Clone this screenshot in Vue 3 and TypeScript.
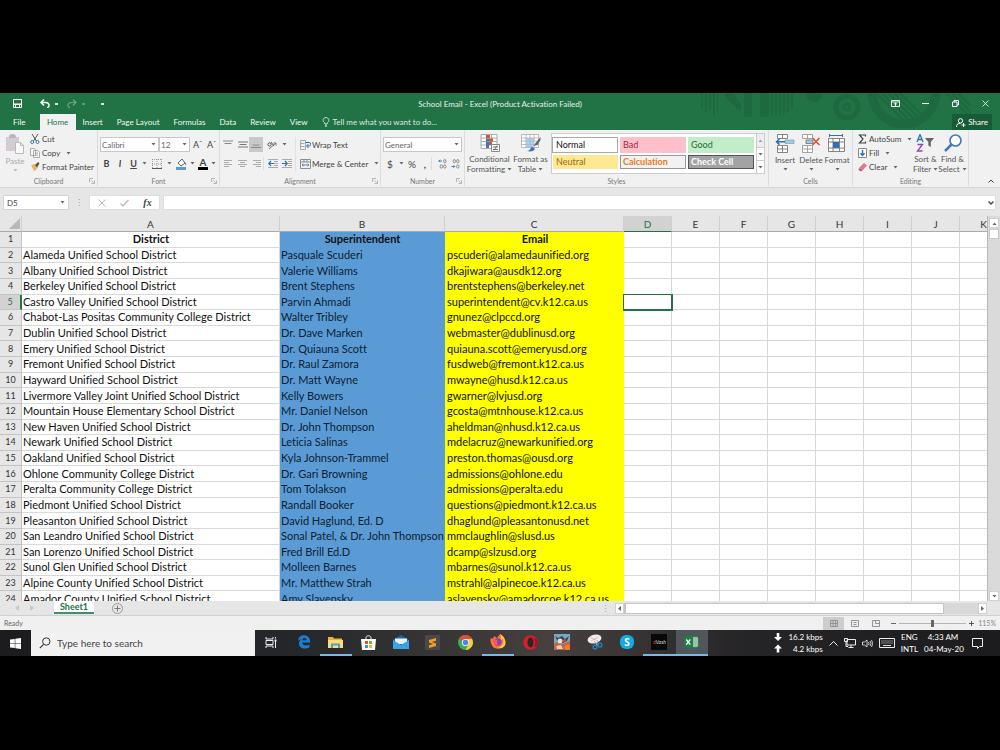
<script setup lang="ts">
import { h, ref } from 'vue'

interface Contact {
  district: string
  name: string
  email: string
}

const Caret = () =>
  h('svg', { class: 'caret', viewBox: '0 0 5 3', width: 5, height: 3, 'aria-hidden': 'true' }, [
    h('path', { d: 'M.5 0h4L2.500 2.600z', fill: '#666' }),
  ])

const Launcher = () =>
  h('svg', { class: 'launcher', viewBox: '0 0 6 6', width: 6, height: 6, 'aria-hidden': 'true' }, [
    h('path', { d: 'M.5 4V.5H4M2.500 2.500l2 2M5.500 2.500v3h-3', fill: 'none', stroke: '#999', 'stroke-width': 0.7 }),
  ])

const tabs = ['File', 'Home', 'Insert', 'Page Layout', 'Formulas', 'Data', 'Review', 'View']
const columns = ['A', 'B', 'C', 'D', 'E', 'F', 'G', 'H', 'I', 'J', 'K']
const emptyColumns = ['D', 'E', 'F', 'G', 'H', 'I', 'J', 'K']
const cellRef = ref('D5')
const formula = ref('')
const query = ref('')
const zoom = ref(50)

const contacts: Contact[] = [
  { district: 'Alameda Unified School District', name: 'Pasquale Scuderi', email: 'pscuderi@alamedaunified.org' },
  { district: 'Albany Unified School District', name: 'Valerie Williams', email: 'dkajiwara@ausdk12.org' },
  { district: 'Berkeley Unified School District', name: 'Brent Stephens', email: 'brentstephens@berkeley.net' },
  { district: 'Castro Valley Unified School District', name: 'Parvin Ahmadi', email: 'superintendent@cv.k12.ca.us' },
  { district: 'Chabot-Las Positas Community College District', name: 'Walter Tribley', email: 'gnunez@clpccd.org' },
  { district: 'Dublin Unified School District', name: 'Dr. Dave Marken', email: 'webmaster@dublinusd.org' },
  { district: 'Emery Unified School District', name: 'Dr. Quiauna Scott', email: 'quiauna.scott@emeryusd.org' },
  { district: 'Fremont Unified School District', name: 'Dr. Raul Zamora', email: 'fusdweb@fremont.k12.ca.us' },
  { district: 'Hayward Unified School District', name: 'Dr. Matt Wayne', email: 'mwayne@husd.k12.ca.us' },
  { district: 'Livermore Valley Joint Unified School District', name: 'Kelly Bowers', email: 'gwarner@lvjusd.org' },
  { district: 'Mountain House Elementary School District', name: 'Mr. Daniel Nelson', email: 'gcosta@mtnhouse.k12.ca.us' },
  { district: 'New Haven Unified School District', name: 'Dr. John Thompson', email: 'aheldman@nhusd.k12.ca.us' },
  { district: 'Newark Unified School District', name: 'Leticia Salinas', email: 'mdelacruz@newarkunified.org' },
  { district: 'Oakland Unified School District', name: 'Kyla Johnson-Trammel', email: 'preston.thomas@ousd.org' },
  { district: 'Ohlone Community College District', name: 'Dr. Gari Browning', email: 'admissions@ohlone.edu' },
  { district: 'Peralta Community College District', name: 'Tom Tolakson', email: 'admissions@peralta.edu' },
  { district: 'Piedmont Unified School District', name: 'Randall Booker', email: 'questions@piedmont.k12.ca.us' },
  { district: 'Pleasanton Unified School District', name: 'David Haglund, Ed. D', email: 'dhaglund@pleasantonusd.net' },
  { district: 'San Leandro Unified School District', name: 'Sonal Patel, & Dr. John Thompson', email: 'mmclaughlin@slusd.us' },
  { district: 'San Lorenzo Unified School District', name: 'Fred Brill Ed.D', email: 'dcamp@slzusd.org' },
  { district: 'Sunol Glen Unified School District', name: 'Molleen Barnes', email: 'mbarnes@sunol.k12.ca.us' },
  { district: 'Alpine County Unified School District', name: 'Mr. Matthew Strah', email: 'mstrahl@alpinecoe.k12.ca.us' },
  { district: 'Amador County Unified School District', name: 'Amy Slavensky', email: 'aslavensky@amadorcoe.k12.ca.us' },
]
</script>

<template>
  <main class="screen">
    <header class="top">
      <svg class="pattern" width="300" height="37" viewBox="0 0 300 37" aria-hidden="true">
        <g fill="#1e693f">
          <path d="M1 0h2v16H1zM5 0h2v20H5zM9 0h2v17H9zM13 0h2v23h-2zM17 0h1v20h-1zM25 0h9l7 12v7L25 4zM44 0h8v24h-8zM60 0h9v24h-9z" />
          <path d="M71 0h2v24h-2zM75 0h2v23h-2zM79 0h2v23h-2zM83 0h2v21h-2zM87 0h2v19h-2zM91 0h2v16h-2z" />
          <circle cx="114" cy="1" r="8" />
        </g>
        <g fill="none" stroke="#1e693f">
          <circle cx="147" cy="14" r="11" stroke-width="5" />
          <circle cx="147" cy="14" r="3" stroke-width="3" />
          <circle cx="204" cy="-1" r="32" stroke-width="9" />
          <path d="M176 0l28 28M182 0l26 26M188 0l25 25M194 0l23 23M200 0l20 20M246 0l24 24M252 0l19 19M258 0l13 13" stroke-width="2" />
        </g>
      </svg>
      <div class="titlebar">
        <div class="quick">
          <button aria-label="Save"><svg width="9" height="9" viewBox="0 0 9 9"><path d="M.5.5h8v8h-8z" fill="none" stroke="#fff" /><path d="M1 4.500h7V6H1zM2 6h1v3H2zM6 6h1v3H6z" fill="#fff" /></svg></button>
          <button aria-label="Undo"><svg width="10" height="9" viewBox="0 0 10 9"><path d="M4 .5L1 3.500l3 3M1 3.500h4.500C8 3.500 9 5 9 6.500S8 8.500 7 8.500" fill="none" stroke="#fff" stroke-width="1.500" /></svg></button>
          <i class="tri"></i>
          <button aria-label="Redo" class="faded"><svg width="10" height="9" viewBox="0 0 10 9"><path d="M6 .5l3 3-3 3M9 3.500H4.500C2 3.500 1 5 1 6.500s1 2 2 2" fill="none" stroke="#fff" stroke-width="1.200" /></svg></button>
          <i class="tri faded"></i>
          <button aria-label="Customize"><i class="tri"></i></button>
        </div>
        <h1>School Email - Excel (Product Activation Failed)</h1>
        <div class="window-buttons">
          <button aria-label="Ribbon display options"><svg width="9" height="7" viewBox="0 0 9 7"><path d="M.5.5h8v6h-8zM.5 2h8M4.500 6V3M3 4.300L4.500 3 6 4.300" fill="none" stroke="#fff" stroke-width=".9" /></svg></button>
          <button aria-label="Minimize"><svg width="7" height="7" viewBox="0 0 7 7"><path d="M0 3.500h7" stroke="#fff" /></svg></button>
          <button aria-label="Restore"><svg width="7" height="7" viewBox="0 0 7 7"><path d="M.5 2h4.500v4.500H.5zM2 2V.5h4.500V5H5" fill="none" stroke="#fff" /></svg></button>
          <button aria-label="Close"><svg width="7" height="7" viewBox="0 0 7 7"><path d="M.5.5l6 6M6.500.5l-6 6" stroke="#fff" stroke-width=".8" /></svg></button>
        </div>
      </div>
      <nav class="tabs">
        <button v-for="tab in tabs" :key="tab" :class="{ active: tab === 'Home' }">{{ tab }}</button>
        <button class="tell">
          <svg width="8" height="10" viewBox="0 0 8 10"><path d="M2.800 7V6C0 4 1 .6 4 .6S8 4 5.200 6v1zM3 8.200h2M3.200 9.400h1.600" fill="none" stroke="#e5f3ea" stroke-width=".8" /></svg>
          Tell me what you want to do...
        </button>
        <button class="share">
          <svg width="10" height="9" viewBox="0 0 10 9"><circle cx="4.500" cy="2.800" r="2.200" fill="none" stroke="#fff" /><path d="M.5 9C.5 6.500 2 5.200 4.500 5.200M5.500 7h4M7.500 5v4" fill="none" stroke="#fff" /></svg>
          Share
        </button>
      </nav>
    </header>

    <section class="ribbon" aria-label="Home ribbon">
      <div class="group">
        <div class="body clip">
          <button class="big paste">
            <svg width="20" height="20" viewBox="0 0 20 20"><path d="M1 3h13v14H1z" fill="#d3cdd3" /><path d="M4 3c0-2 1.500-3 3.500-3S11 1 11 3v1H4z" fill="#b9b4b9" /><path d="M10.500 8.500h5l3 3v8h-8zM15.500 8.500v3h3" fill="#f8f8f8" stroke="#bbb" /></svg>
            <span>Paste</span><Caret />
          </button>
          <div class="stack">
            <button><svg width="10" height="10" viewBox="0 0 10 10"><path d="M2 0l4.500 7M8 0L3.500 7" stroke="#555" fill="none" /><circle cx="2.200" cy="8" r="1.500" fill="none" stroke="#3f78b5" /><circle cx="7.500" cy="8" r="1.500" fill="none" stroke="#3f78b5" /></svg>Cut</button>
            <button><svg width="10" height="10" viewBox="0 0 10 10"><path d="M.5.5h4l1 1v6h-5zM3.500 2.500H8l1.500 2v5h-6zM5 5h3M5 7h3" fill="#f7f7f7" stroke="#999" stroke-width=".8" /></svg>Copy<Caret /></button>
            <button><svg width="10" height="10" viewBox="0 0 10 10"><path d="M1 3l4-1 3 3-2 3-2 1z" fill="#e9b565" /><path d="M5 3l3-3 1.500 1.500-2.500 4z" fill="#555" /></svg>Format Painter</button>
          </div>
        </div>
        <footer>Clipboard<Launcher /></footer>
      </div>

      <div class="group">
        <div class="body rows">
          <div class="row font-top">
            <label class="pick"><select aria-label="Font"><option>Calibri</option></select><Caret /></label>
            <label class="pick"><select aria-label="Font size"><option>12</option></select><Caret /></label>
            <button class="letter" aria-label="Increase font size">A<sup>ˆ</sup></button>
            <button class="letter" aria-label="Decrease font size">A<sup>ˇ</sup></button>
          </div>
          <div class="row font-bottom">
            <button><b>B</b></button><button><b><em>I</em></b></button><button><b><u>U</u></b></button><Caret />
            <button aria-label="Borders"><svg width="10" height="10" viewBox="0 0 10 10"><path d="M.5 0v9M5 0v9M9.500 0v9M0 .5h10M0 5h10" stroke="#888" stroke-width=".8" stroke-dasharray="1 1" /><path d="M0 9.500h10" stroke="#555" /></svg></button><Caret />
            <button aria-label="Fill color"><svg width="11" height="12" viewBox="0 0 11 12"><path d="M2 5l4-4 3 4-4 3z" fill="#fff" stroke="#555" stroke-width=".9" /><path d="M9 4q2 2 1 3.500Q8.500 7 9 4" fill="#3b79bd" /><path d="M0 9h10v3H0z" fill="#5b9bd5" /></svg></button><Caret />
            <button aria-label="Font color" class="font-color">A</button><Caret />
          </div>
        </div>
        <footer>Font<Launcher /></footer>
      </div>

      <div class="group">
        <div class="body align">
          <div class="rows align-left">
            <div class="row align-top">
              <button aria-label="Top align"><svg width="10" height="9" viewBox="0 0 10 9"><path d="M0 1h10M1.500 3.500h7" stroke="#888" /></svg></button>
              <button aria-label="Middle align"><svg width="10" height="9" viewBox="0 0 10 9"><path d="M0 2h10M1.500 4.500h7M0 7h10" stroke="#777" /></svg></button>
              <button aria-label="Bottom align" class="pressed"><svg width="10" height="9" viewBox="0 0 10 9"><path d="M1.500 5h7M0 7.500h10" stroke="#888" /></svg></button>
              <button aria-label="Orientation"><svg width="11" height="10" viewBox="0 0 11 10"><path d="M2 9l7-6M6.500 3H9v2.500" fill="none" stroke="#777" /><circle cx="2.500" cy="4.500" r="1.600" fill="none" stroke="#555" /><path d="M4 2l3 4" stroke="#555" /></svg></button><Caret />
            </div>
            <div class="row align-bottom">
              <button aria-label="Align left"><svg width="9" height="8" viewBox="0 0 9 8"><path d="M0 .5h8M0 2.500h5M0 4.500h8M0 6.500h5" stroke="#999" stroke-width=".8" /></svg></button>
              <button aria-label="Center"><svg width="9" height="8" viewBox="0 0 9 8"><path d="M0 .5h9M2 2.500h5M0 4.500h9M2 6.500h5" stroke="#999" stroke-width=".8" /></svg></button>
              <button aria-label="Align right"><svg width="9" height="8" viewBox="0 0 9 8"><path d="M1 .5h8M4 2.500h5M1 4.500h8M4 6.500h5" stroke="#999" stroke-width=".8" /></svg></button>
              <i class="vline"></i>
              <button aria-label="Decrease indent"><svg width="10" height="9" viewBox="0 0 10 9"><path d="M0 .5h10M6 2.500h4M6 4.500h4M6 6.500h4M0 8.500h10" stroke="#999" stroke-width=".8" /><path d="M6 4.500H1M3 2L.8 4.500 3 7" fill="none" stroke="#2f6fb5" stroke-width="1.200" /></svg></button>
              <button aria-label="Increase indent"><svg width="10" height="9" viewBox="0 0 10 9"><path d="M0 .5h10M6 2.500h4M6 4.500h4M6 6.500h4M0 8.500h10" stroke="#999" stroke-width=".8" /><path d="M0 4.500h5M3 2l2.200 2.500L3 7" fill="none" stroke="#2f6fb5" stroke-width="1.200" /></svg></button>
            </div>
          </div>
          <div class="rows align-right">
            <button class="row"><svg width="11" height="10" viewBox="0 0 11 10"><path d="M.5.5h5v9h-5zM.5 3.500h4M.5 6.500h4" fill="none" stroke="#999" stroke-width=".8" /><path d="M5.500 2.500h3.700c2 0 2 3.500 0 3.500H7M8.500 4L6.500 6l2 2" fill="none" stroke="#2f6fb5" /></svg>Wrap Text</button>
            <button class="row"><svg width="11" height="10" viewBox="0 0 11 10"><path d="M.5.5h10v9H.5zM.5 3h10M4 .5V3M7 .5V3" fill="none" stroke="#777" stroke-width=".8" /><path d="M2 6h7M3.500 4.800L2.200 6l1.300 1.200M7.500 4.800L8.800 6 7.500 7.200" fill="none" stroke="#2f6fb5" stroke-width=".8" /></svg>Merge &amp; Center<Caret /></button>
          </div>
        </div>
        <footer>Alignment<Launcher /></footer>
      </div>

      <div class="group">
        <div class="body rows">
          <div class="row number-top"><label class="pick"><select aria-label="Number format"><option>General</option></select><Caret /></label></div>
          <div class="row number-bottom">
            <button class="sym">$</button><Caret /><button class="sym">%</button><button class="sym comma">,</button><i class="vline"></i>
            <button aria-label="Increase decimal"><svg width="9" height="10" viewBox="0 0 9 10"><path d="M4 2H.8M2 .7L.8 2 2 3.300" fill="none" stroke="#2f6fb5" stroke-width=".9" /><g fill="none" stroke="#777" stroke-width=".8"><ellipse cx="6.800" cy="2.200" rx="1.200" ry="1.700" /><ellipse cx="3.300" cy="7.500" rx="1.200" ry="1.700" /><ellipse cx="6.800" cy="7.500" rx="1.200" ry="1.700" /></g></svg></button>
            <button aria-label="Decrease decimal"><svg width="9" height="10" viewBox="0 0 9 10"><path d="M.5 7.500h3.200M2.500 6.200l1.200 1.300L2.500 8.800" fill="none" stroke="#2f6fb5" stroke-width=".9" /><g fill="none" stroke="#777" stroke-width=".8"><ellipse cx="3.300" cy="2.200" rx="1.200" ry="1.700" /><ellipse cx="6.800" cy="2.200" rx="1.200" ry="1.700" /><ellipse cx="6.800" cy="7.500" rx="1.200" ry="1.700" /></g></svg></button>
          </div>
        </div>
        <footer>Number<Launcher /></footer>
      </div>

      <div class="group">
        <div class="body styles">
          <button class="big wide">
            <svg width="20" height="18" viewBox="0 0 20 18"><path d="M1 .5h16v14H1zM6.500.5v14M11.500.5v14M1 4h16M1 7.500h16M1 11h16" fill="#fff" stroke="#999" stroke-width=".8" /><path d="M6 1h4v3H6zM9 8h3v3H9z" fill="#d0533c" /><path d="M6 4.500h3v3H6zM6 8h3v6H6z" fill="#3f78b5" /><path d="M9 4.500h4v3H9z" fill="#d0533c" /><path d="M11.500 10.500h8v7h-8z" fill="#fff" stroke="#888" /><path d="M13 13h5M13 15.500h5M17 11.500l-3 5" stroke="#555" stroke-width=".8" /></svg>
            <span>Conditional<br>Formatting <Caret /></span>
          </button>
          <button class="big wide">
            <svg width="20" height="18" viewBox="0 0 20 18"><path d="M.5.5h17v13H.5zM5 .5v13M9 .5v13M13 .5v13M.5 4h17M.5 7h17M.5 10.500h17" fill="#fff" stroke="#aaa" stroke-width=".8" /><path d="M5 4h8v9H5z" fill="#9cc0e4" opacity=".8" /><path d="M19.500 3l-5 6-2 3 4-1 3-5z" fill="#666" /><path d="M6 17c2 0 4-2 4.500-4.500L14 15c-1 2-4 3-8 2z" fill="#3673b4" /></svg>
            <span>Format as<br>Table <Caret /></span>
          </button>
          <div class="gallery">
            <button class="sw normal">Normal</button><button class="sw bad">Bad</button><button class="sw good">Good</button>
            <button class="sw neutral">Neutral</button><button class="sw calc">Calculation</button><button class="sw check">Check Cell</button>
          </div>
          <div class="gallery-nav"><button aria-label="Previous styles" class="off"><Caret class="flip" /></button><button aria-label="Next styles"><Caret /></button><button aria-label="More styles"><Caret /></button></div>
        </div>
        <footer>Styles</footer>
      </div>

      <div class="group">
        <div class="body cells">
          <button class="big"><svg width="20" height="19" viewBox="0 0 20 19"><path d="M2.500.5h10v4h-10zM7.500.5v4M2.500 11.500h10v7h-10zM7.500 11.500v7M2.500 15h10" fill="#fff" stroke="#777" stroke-width=".9" /><path d="M10 6h9v3.500h-9z" fill="#a9c8e6" stroke="#7a9cc0" stroke-width=".7" /><path d="M10 7.800H2M4.500 5L1.500 7.800l3 2.800" fill="none" stroke="#2f6fb5" stroke-width="1.500" /></svg><span>Insert</span><Caret /></button>
          <button class="big"><svg width="20" height="19" viewBox="0 0 20 19"><path d="M1.500.5h10v4h-10zM6.500.5v4M1.500 11.500h10v7h-10zM6.500 11.500v7M1.500 15h10" fill="#fff" stroke="#999" stroke-width=".9" /><path d="M5 6h7v3.500H5z" fill="#a9c8e6" stroke="#567" stroke-width=".7" /><path d="M11.500 4l7 7M18.500 4l-7 7" stroke="#d4583b" stroke-width="1.700" /></svg><span>Delete</span><Caret /></button>
          <button class="big"><svg width="20" height="19" viewBox="0 0 20 19"><path d="M2.500 1.500h13M2.500 0v3M15.500 0v3" stroke="#2f6fb5" /><path d="M1.500 4.500h16v13h-16zM6 4.500v13M12.500 4.500v13M1.500 8h16M1.500 14h16" fill="#fff" stroke="#777" stroke-width=".9" /><path d="M6 8h6v6H6z" fill="#2f6fb5" /></svg><span>Format</span><Caret /></button>
        </div>
        <footer>Cells</footer>
      </div>

      <div class="group">
        <div class="body editing">
          <div class="stack">
            <button><svg width="9" height="10" viewBox="0 0 9 10"><path d="M7.500 2.500V1H1.500l3.500 4-3.500 4h6V7.500" fill="none" stroke="#444" stroke-width="1.200" /></svg>AutoSum<Caret /></button>
            <button><svg width="9" height="10" viewBox="0 0 9 10"><path d="M.5.5h8v9h-8z" fill="#fff" stroke="#888" /><path d="M4.500 2v5.500M2.500 5.200l2 2.300 2-2.300" fill="none" stroke="#2f6fb5" stroke-width="1.400" /></svg>Fill<Caret /></button>
            <button><svg width="9" height="10" viewBox="0 0 9 10"><path d="M1 6l5-5 3 2.500-4.500 5z" fill="#dd7b8c" /><path d="M1 6l3.500 2.500L3 9.500.5 8z" fill="#b15b8a" /></svg>Clear<Caret /></button>
          </div>
          <button class="big"><svg width="19" height="18" viewBox="0 0 19 18"><path d="M1 8l3-7.500L7 8M2 5.500h4" fill="none" stroke="#2f6fb5" stroke-width="1.300" /><path d="M1.500 10.500h5L1.500 17h5" fill="none" stroke="#8d44ad" stroke-width="1.300" /><path d="M9 4h9l-3.200 4v5l-2.500-1.500V8z" fill="#666" /></svg><span>Sort &amp;<br>Filter <Caret /></span></button>
          <button class="big"><svg width="20" height="18" viewBox="0 0 20 18"><circle cx="12.500" cy="6.500" r="5.500" fill="#fff" stroke="#3f78b5" stroke-width="1.600" /><path d="M8.500 10.500L2 17" stroke="#3f78b5" stroke-width="2.500" /></svg><span>Find &amp;<br>Select <Caret /></span></button>
        </div>
        <footer>Editing</footer>
      </div>
      <button class="collapse" aria-label="Collapse ribbon"><svg width="6" height="4" viewBox="0 0 6 4"><path d="M.5 3.500L3 1l2.500 2.500" fill="none" stroke="#444" /></svg></button>
    </section>

    <section class="formula-bar">
      <label class="name-box"><input v-model="cellRef" aria-label="Name box"><Caret /></label>
      <span class="grip">⋮</span>
      <div class="fx">
        <button aria-label="Cancel"><svg width="8" height="8" viewBox="0 0 8 8"><path d="M.5.5l7 7M7.500.5l-7 7" stroke="#bbb" /></svg></button>
        <button aria-label="Enter"><svg width="9" height="8" viewBox="0 0 9 8"><path d="M.5 4.500L3 7l5.500-6" fill="none" stroke="#bbb" stroke-width="1.300" /></svg></button>
        <button class="fn">fx</button>
      </div>
      <label class="formula"><input v-model="formula" aria-label="Formula"><svg width="6" height="4" viewBox="0 0 6 4"><path d="M.5.5L3 3 5.500.5" fill="none" stroke="#444" stroke-width="1.300" /></svg></label>
    </section>

    <section class="sheet">
      <div class="grid">
        <table>
          <colgroup><col class="c-num"><col class="c-a"><col class="c-b"><col class="c-c"><col v-for="c in emptyColumns" :key="c" class="c-x"></colgroup>
          <thead>
            <tr>
              <th class="corner"><svg width="11" height="11" viewBox="0 0 11 11"><path d="M11 0v11H0z" fill="#b8b8b8" /></svg></th>
              <th v-for="c in columns" :key="c" :class="{ current: c === 'D' }">{{ c }}</th>
            </tr>
          </thead>
          <tbody>
            <tr class="titles"><th>1</th><td>District</td><td class="blue">Superintendent</td><td class="yellow">Email</td><td v-for="c in emptyColumns" :key="c"></td></tr>
            <tr v-for="(row, i) in contacts" :key="row.email">
              <th :class="{ current: i === 3 }">{{ i + 2 }}</th>
              <td>{{ row.district }}</td>
              <td class="blue">{{ row.name }}</td>
              <td class="yellow">{{ row.email }}</td>
              <td v-for="c in emptyColumns" :key="c" :class="{ selected: i === 3 && c === 'D' }"></td>
            </tr>
          </tbody>
        </table>
      </div>
      <div class="vscroll">
        <button aria-label="Scroll up"><Caret class="flip" /></button>
        <div class="thumb"></div>
        <button class="down" aria-label="Scroll down"><Caret /></button>
      </div>
    </section>

    <section class="sheet-bar">
      <button class="arrow" aria-label="Previous sheet"><svg width="4" height="6" viewBox="0 0 4 6"><path d="M4 0v6L0 3z" fill="#c8c8c8" /></svg></button>
      <button class="arrow" aria-label="Next sheet"><svg width="4" height="6" viewBox="0 0 4 6"><path d="M0 0v6l4-3z" fill="#c8c8c8" /></svg></button>
      <button class="sheet-tab">Sheet1</button>
      <button class="add" aria-label="New sheet"><svg width="11" height="11" viewBox="0 0 11 11"><circle cx="5.500" cy="5.500" r="5" fill="none" stroke="#888" stroke-width=".8" /><path d="M5.500 2.500v6M2.500 5.500h6" stroke="#777" /></svg></button>
      <span class="grip dots">⋮</span>
      <div class="hscroll">
        <button aria-label="Scroll left"><svg width="3" height="5" viewBox="0 0 3 5"><path d="M3 0v5L0 2.500z" fill="#666" /></svg></button>
        <div class="thumb"></div>
        <button class="right" aria-label="Scroll right"><svg width="3" height="5" viewBox="0 0 3 5"><path d="M0 0v5l3-2.500z" fill="#666" /></svg></button>
      </div>
    </section>

    <section class="status">
      <span>Ready</span>
      <div class="views">
        <button class="on" aria-label="Normal view"><svg width="8" height="7" viewBox="0 0 8 7"><path d="M.5.5h7v6h-7zM.5 3.500h7M3 .5v6M5.500.5v6" fill="none" stroke="#888" stroke-width=".8" /></svg></button>
        <button aria-label="Page layout view"><svg width="8" height="7" viewBox="0 0 8 7"><path d="M.5.5h7v6h-7zM2.500 2.500h3M2.500 4.500h3" fill="none" stroke="#888" stroke-width=".9" /></svg></button>
        <button aria-label="Page break view"><svg width="8" height="7" viewBox="0 0 8 7"><path d="M.5.5h7v6h-7zM3.500.5v3h4" fill="none" stroke="#888" stroke-width=".9" /></svg></button>
      </div>
      <button class="zoom-step" aria-label="Zoom out"><svg width="5" height="5" viewBox="0 0 5 5"><path d="M0 2.500h5" stroke="#666" /></svg></button>
      <input v-model="zoom" type="range" min="0" max="100" aria-label="Zoom">
      <button class="zoom-step" aria-label="Zoom in"><svg width="5" height="5" viewBox="0 0 5 5"><path d="M0 2.500h5M2.500 0v5" stroke="#555" /></svg></button>
      <output>115%</output>
    </section>

    <footer class="taskbar">
      <button class="start" aria-label="Start"><svg width="11" height="11" viewBox="0 0 11 11"><path d="M0 1.600l4.800-.7v4.300H0zM5.300.8L11 0v5.200H5.300zM0 5.800h4.800v4.300L0 9.400zM5.300 5.800H11V11l-5.700-.8z" fill="#fff" /></svg></button>
      <label class="search"><svg width="12" height="12" viewBox="0 0 12 12"><circle cx="7.300" cy="4.500" r="3.700" fill="none" stroke="#333" /><path d="M4.600 7.300L.8 11.200" stroke="#333" stroke-width="1.100" /></svg><input v-model="query" placeholder="Type here to search" aria-label="Search"></label>
      <nav class="apps" aria-label="Applications">
        <button aria-label="Task view"><svg width="13" height="11" viewBox="0 0 13 11"><path d="M1 0v2h7V0M1 11V9h7v2M1 3.500h7v4H1zM10.500 3.500V11M10.500 0v1.500" fill="none" stroke="#eee" /><path d="M9.500 2.500h2v2h-2z" fill="#eee" /></svg></button>
        <button aria-label="Edge"><svg width="14" height="14" viewBox="0 0 14 14"><path d="M1 6C1.500 2 4 .3 7 .3c4 0 6.200 3 6.200 7.200H5c.2 3.200 4.500 3.700 7.500 2v2.700C8 14.800 2 13.500 2 8.500 2 6 3.500 4.500 5.500 4 3.500 4 2 4.800 1 6zm4.200-.8h4.500C9.600 2 5.500 2 5.200 5.200z" fill="#1683d8" /></svg></button>
        <button class="running" aria-label="File Explorer"><svg width="15" height="13" viewBox="0 0 15 13"><path d="M0 1h5l1 1.500h8V12H0z" fill="#e8b53b" /><path d="M0 4h15v8H0z" fill="#fbdc7a" /><path d="M3 7.500h9V12h-2V9.500H5V12H3z" fill="#4d9cc9" /></svg></button>
        <button aria-label="Store"><svg width="15" height="15" viewBox="0 0 15 15"><path d="M5 4V2.500C5 .2 10 .2 10 2.500V4" fill="none" stroke="#eee" /><path d="M0 4h15l-1 11H1z" fill="#fff" /><path d="M4 6h3v3H4z" fill="#e8502a" /><path d="M8 6h3v3H8z" fill="#7bb441" /><path d="M4 10h3v3H4z" fill="#279fda" /><path d="M8 10h3v3H8z" fill="#f4b929" /></svg></button>
        <button aria-label="Mail"><svg width="16" height="14" viewBox="0 0 16 14"><path d="M0 5l8-5 8 5v9H0z" fill="#1769ae" /><path d="M2 3.500h12V9H2z" fill="#e9f5fc" /><path d="M0 5l8 5 8-5v9H0z" fill="#36a4e8" /></svg></button>
        <button aria-label="Sublime Text"><svg width="15" height="15" viewBox="0 0 15 15"><rect width="15" height="15" rx="1" fill="#494949" /><path d="M11 3v2.700L7 7l4 1.500V11l-7 2v-2.700L8 9 4 7.500V5z" fill="#f59c27" /></svg></button>
        <button aria-label="Chrome"><svg width="15" height="15" viewBox="0 0 15 15"><circle cx="7.500" cy="7.500" r="7.500" fill="#44a957" /><path d="M7.500 7.500L1 3.750A7.500 7.500 0 0 1 14 3.750z" fill="#e44b3d" /><path d="M7.500 4H14.100A7.500 7.500 0 0 1 7.500 15l3.500-6z" fill="#fbcf3b" /><circle cx="7.500" cy="7.500" r="3.600" fill="#fff" /><circle cx="7.500" cy="7.500" r="2.800" fill="#4688ee" /></svg></button>
        <button class="running" aria-label="Firefox"><svg width="16" height="16" viewBox="0 0 16 16"><path d="M1 4l2 1 1-3 3 2 3-4c4 2 6 6 5 10a7.300 7.300 0 0 1-14-1C.5 7 0 6 1 4z" fill="#ff7139" /><path d="M10 0c2 3 0 4 1 6l2-1c1 4-1 8-5 8 5 3 9-2 7-7-1-3-3-5-5-6z" fill="#ffc83d" /><circle cx="7.800" cy="8" r="3.700" fill="#7748b8" /><path d="M3 6c2-1 4 0 5 1-2 1-1 3 1 3-3 2-6 0-6-4z" fill="#ff5364" /></svg></button>
        <button aria-label="Opera"><svg width="15" height="15" viewBox="0 0 15 15"><circle cx="7.500" cy="7.500" r="7.300" fill="#d71e2b" /><ellipse cx="7.500" cy="7.500" rx="3" ry="5" fill="#29262a" /><path d="M10 2.500c3 2 3 8 0 10 6-1 6-9 0-10z" fill="#94151e" /></svg></button>
        <button aria-label="Game"><svg width="16" height="16" viewBox="0 0 16 16"><path d="M0 0h16v16H0z" fill="#79a7c4" /><path d="M0 10l4-3 5 3 7-3v9H0z" fill="#bd6747" /><path d="M1 2l3 2 4-2 3 3 4-3-2 5-4 2-5-1z" fill="#38424f" /><circle cx="6" cy="7" r="2.500" fill="#e9e1d2" /><circle cx="10.500" cy="6.500" r="1.500" fill="#d44b36" /><path d="M2 12l5-1 2 4H3z" fill="#e7d1bb" /><circle cx="13.500" cy="13.500" r="2.800" fill="#f47b20" /></svg></button>
        <button aria-label="Snipping Tool"><svg width="16" height="16" viewBox="0 0 16 16"><ellipse cx="7.500" cy="5" rx="7" ry="4.300" fill="#eee" transform="rotate(-14 7.500 5)" /><path d="M3 3l8 4M4 7l7-4" stroke="#d9a9ab" stroke-width=".8" /><path d="M7 7l4 5M11 7l-2 5" stroke="#aaa" /><circle cx="8" cy="13" r="1.900" fill="none" stroke="#2484c7" stroke-width="1.300" /><circle cx="13" cy="11" r="1.900" fill="none" stroke="#2484c7" stroke-width="1.300" /></svg></button>
        <button aria-label="Skype" class="skype"><span>S</span></button>
        <button class="running" aria-label="Console"><span class="console"><i>d</i>Vash</span></button>
        <button class="running focused" aria-label="Excel"><svg width="15" height="14" viewBox="0 0 15 14"><path d="M7 2h7v10H7z" fill="#fff" stroke="#2f8a57" /><path d="M9 4h4M9 6h4M9 8h4M9 10h4" stroke="#2f8a57" /><path d="M0 1.500L9 0v14l-9-1.500z" fill="#1f7e49" /><path d="M2.300 4.500l4 5.200M6.300 4.500l-4 5.200" stroke="#fff" stroke-width="1.300" /></svg></button>
      </nav>
      <div class="tray">
        <svg width="8" height="22" viewBox="0 0 8 22"><path d="M2.700 1h2.600v4H8L4 9 0 5h2.700zM2.700 20.500h2.600v-4H8l-4-4-4 4h2.700z" fill="#fff" /></svg>
        <p class="net">16.2 kbps<br>4.2 kbps</p>
        <svg width="9" height="6" viewBox="0 0 9 6"><path d="M.5 5.500l4-4 4 4" fill="none" stroke="#eee" /></svg>
        <svg width="12" height="10" viewBox="0 0 12 10"><path d="M3 1.500h8.500v5.500H3zM7 7v2M4.500 9.500h5M.5.5h3v3h-3zM2 3.500v5h2" fill="none" stroke="#eee" /></svg>
        <svg width="11" height="9" viewBox="0 0 11 9"><path d="M.5 3h2L5 1v7L2.500 6h-2zM6.500 3q1 1.500 0 3M8 2q2 2.500 0 5M9.500 1q2.500 3.500 0 7" fill="none" stroke="#ddd" stroke-width=".9" /></svg>
        <svg width="16" height="10" viewBox="0 0 16 10"><path d="M.5.5h15v9H.5z" fill="none" stroke="#eee" /><path d="M2.500 3h11M2.500 5h11" stroke="#ddd" stroke-dasharray="1 1" /><path d="M4 7.500h8" stroke="#ddd" /></svg>
        <p class="lang">ENG<br>INTL</p>
        <p class="clock">4:33 AM<br>04-May-20</p>
        <svg width="11" height="11" viewBox="0 0 11 11"><path d="M.5.5h10v8H7.500l-2 2v-2h-5z" fill="none" stroke="#eee" /></svg>
      </div>
    </footer>
  </main>
</template>

<style>
html, body { margin: 0; background: #000; }
</style>

<style scoped>
* { box-sizing: border-box; }
.screen {
  height: 100vh;
  min-height: 560px;
  padding: 93px 0 94px;
  display: flex;
  flex-direction: column;
  overflow: hidden;
  background: #000;
  color: #444;
  font: 8px/10px Lato, "Open Sans", sans-serif;
  font-variant-ligatures: none;
}
.screen > * { flex: none; }
button, input, select { font: inherit; font-variant-ligatures: none; color: inherit; background: none; border: 0; padding: 0; margin: 0; border-radius: 0; outline: 0; min-width: 0; }
button { display: flex; align-items: center; justify-content: center; white-space: nowrap; }
svg { flex: none; display: block; }

.top { position: relative; height: 37px; background: #217346; color: #fff; }
.pattern { position: absolute; right: 0; top: 0; }
.titlebar { position: relative; height: 21px; display: grid; grid-template-columns: 1fr auto 1fr; align-items: center; }
.quick { display: flex; align-items: center; padding-left: 10px; }
.quick button { width: 15px; margin-right: 12px; }
.quick button + .tri { margin: 0 6px 0 -9px; }
.quick .tri { width: 3px; height: 2px; background: #d5e6dc; }
.quick button:last-child { margin: 0 0 0 4px; }
.quick .faded { opacity: .35; }
h1 { margin: 0; font: inherit; color: #e8f2ec; }
.window-buttons { display: flex; justify-content: flex-end; }
.window-buttons button { width: 30px; height: 20px; }
.tabs { position: relative; display: flex; height: 16px; padding-left: 9px; }
.tabs button { padding: 0 7px; color: #f2f8f4; height: 16px; }
.tabs button:first-child { padding: 0 10px 0 4px; margin-right: 4px; }
.tabs .active { background: #f1f1f1; color: #217346; width: 36px; }
.tabs .tell { gap: 3px; color: #dcebe2; }
.tabs .share { margin: 0 8px 0 auto; background: #185c37; padding: 0 4px; gap: 2px; color: #fff; }

.ribbon { height: 58px; display: grid; grid-template-columns: 98px 122px 161px 84px 1fr 84px 116px 31px; background: #f1f1f1; border-bottom: 1px solid #d5d5d5; }
.group { border-right: 1px solid #dcdcdc; display: flex; flex-direction: column; margin-bottom: 1px; min-width: 0; }
.body { flex: 1; display: flex; min-width: 0; }
.group footer { position: relative; height: 10px; line-height: 10px; font-size: 7px; text-align: center; color: #777; }
.launcher { position: absolute; right: 2px; top: 2px; }
.caret { display: inline-block; vertical-align: middle; justify-self: center; }
.big { flex-direction: column; justify-content: flex-start; padding-top: 4px; color: #555; }
.big > svg:first-child { margin-bottom: 2px; }
.big .caret { margin-top: 3px; }
.big span .caret { margin: 0; }
.stack { display: flex; flex-direction: column; padding-top: 2px; }
.stack button { height: 14px; gap: 2px; justify-content: flex-start; }
.stack .caret { margin-left: 4px; }
.paste { width: 20px; margin: 0 5px; color: #aaa; }
.paste .caret { opacity: .4; }
.rows { flex-direction: column; }
.row { display: grid; align-items: center; height: 15px; }
.row + .row { margin-top: 4px; }
.body.rows { padding: 7px 2px 0; }
.pick { display: flex; align-items: center; height: 15px; background: #fff; border: 1px solid #c8c8c8; padding-right: 2px; }
.pick select { appearance: none; flex: 1; width: 10px; padding-left: 1px; color: #666; line-height: 12px; }
.font-top { grid-template-columns: 59px 31px 15px 13px; }
.letter { font-size: 9px; }
.letter sup { font-size: 7px; line-height: 5px; }
.font-bottom { grid-template-columns: 13px 14px 13px 8px 18px 7px 16px 7px 14px 7px; font-size: 9px; }
.font-color { font-size: 10px; font-weight: bold; border-bottom: 3px solid #000; margin: 0 2px; line-height: 9px; }
.align { padding-top: 7px; }
.align-left { width: 76px; border-right: 1px solid #e0e0e0; height: 34px; }
.align-top { grid-template-columns: 16px 13px 14px 18px 7px; }
.align-bottom { grid-template-columns: 16px 13px 14px 2px 16px 12px; }
.align-right { padding-left: 4px; }
.align-right .row { display: flex; gap: 1px; }
.align-right .caret { margin-left: 5px; }
.pressed { background: #c8c8c8; height: 15px; }
.vline { width: 1px; height: 13px; background: #dcdcdc; }
.number-top { grid-template-columns: 1fr; }
.number-bottom { grid-template-columns: 14px 8px 14px 12px 4px 14px 13px; }
.sym { font-size: 10px; }
.comma { font-weight: bold; }
.styles { padding-left: 4px; }
.wide { width: 41px; text-align: center; }
.gallery { flex: 1; display: grid; grid-template-columns: repeat(3, 1fr); gap: 2px; margin: 3px 0 2px 0; padding: 3px 2px 3px 0; background: #fff; border: 1px solid #ccc; border-right: 0; grid-template-rows: 16px 14px; max-height: 41px; }
.sw { justify-content: flex-start; padding-left: 3px; font-size: 9px; }
.normal { border: 1px solid #a8a8a8; color: #111; }
.bad { background: #ffc0cb; color: #a32b39; }
.good { background: #c1edc8; color: #236f32; }
.neutral { background: #ffe891; color: #9a6a10; margin-left: 1px; }
.calc { background: #f2f2f2; color: #e77a1e; font-weight: bold; border: 1px solid #999; padding-left: 2px; }
.check { background: #a3a3a3; color: #fff; font-weight: bold; border: 1px solid #555; padding-left: 2px; }
.gallery-nav { width: 9px; margin: 3px 3px 2px 0; display: grid; grid-template-rows: 1fr 1fr 1fr; border: 1px solid #ccc; background: #fff; max-height: 41px; }
.gallery-nav button + button { border-top: 1px solid #ccc; }
.gallery-nav .off { background: #e2e2e2; opacity: .6; }
.cells { padding-left: 3px; }
.cells .big { width: 26px; }
.editing { padding-left: 5px; }
.editing .stack { width: 54px; }
.editing .big { width: 27px; text-align: center; }
.collapse { align-self: end; height: 12px; margin-left: 12px; width: 20px; }

.formula-bar { height: 28px; padding: 7px 4px 6px 3px; display: flex; background: #e6e6e6; }
.formula-bar > * { height: 15px; }
.name-box { width: 66px; display: flex; align-items: center; background: #fff; border: 1px solid #d4d4d4; padding: 0 3px; }
.name-box input { flex: 1; width: 10px; height: 12px; }
.grip { color: #999; width: 20px; text-align: center; line-height: 15px; font-family: "DejaVu Sans", sans-serif; }
.fx { width: 71px; background: #fff; display: grid; grid-template-columns: repeat(3, 1fr); border: 1px solid #dedede; }
.fn { font: italic bold 10px/12px "Liberation Serif", serif; }
.formula { flex: 1; margin-left: 3px; display: flex; align-items: center; padding-right: 1px; background: #fff; border: 1px solid #dedede; }
.formula input { flex: 1; height: 12px; }

.screen > .sheet { flex: 1; min-height: 0; display: flex; background: #e6e6e6; }
.grid { flex: 1; min-width: 0; overflow: hidden; border-right: 1px solid #b8b8b8; }
table { table-layout: fixed; width: 1008px; border-collapse: separate; border-spacing: 0; height: 391px; }
.c-num { width: 22px; }
.c-a { width: 258px; }
.c-b { width: 165px; }
.c-c { width: 179px; }
.c-x { width: 48px; }
th, td { padding: 0; line-height: 14px; white-space: nowrap; border: 0 solid #d9d9d9; border-width: 0 1px 1px 0; }
th { background: #e6e6e6; font-weight: normal; font-size: 9px; color: #333; text-align: center; border-color: #c4c4c4; }
thead tr { height: 16px; }
thead th { border-color: #ababab #cfcfcf #ababab #cfcfcf; font-size: 10px; }
.corner svg { margin: 0 1px 0 auto; }
th.current { background: #d2d2d2; color: #217346; }
thead th.current { border-bottom-color: #217346; }
tbody th.current { border-right: 2px solid #217346; }
td { background: #fff; color: #111; font-size: 11px; padding-left: 1px; }
td.blue { background: #5b9bd5; color: #0c1d33; border-color: #5b9bd5; }
td.yellow { background: #ff0; border-color: #ff0; padding-left: 2px; }
.titles td, .titles td.blue { text-align: center; font-weight: bold; color: #111; }
.selected { outline: 1px solid #217346; border-color: #217346; }
.vscroll { width: 12px; padding: 2px 1px 0; display: flex; flex-direction: column; background: #dadada; }
.vscroll button, .hscroll button { background: #fff; border: 1px solid #d0d0d0; }
.vscroll button { height: 10px; }
.vscroll .thumb { height: 10px; margin-top: 1px; background: #fff; border: 1px solid #c8c8c8; }
.vscroll .down { margin-top: auto; }
.flip { transform: rotate(180deg); }

.sheet-bar { height: 15px; display: flex; align-items: center; background: #e6e6e6; border-bottom: 1px solid #d0d0d0; padding: 0 13px 0 9px; }
.arrow { width: 15px; }
.sheet-tab { margin-left: 15px; width: 40px; height: 13px; align-self: flex-start; background: #fff; border-bottom: 2px solid #4a8c69; color: #217346; font-weight: bold; font-size: 9px; }
.add { margin-left: 18px; }
.dots { margin-left: auto; }
.hscroll { width: 38%; display: flex; height: 11px; background: #d8d8d8; }
.hscroll button { width: 9px; }
.hscroll .thumb { width: 86%; background: #fff; border: 1px solid #c5c5c5; border-left-width: 2px; }
.hscroll .right { margin-left: auto; }

.status { height: 14px; display: flex; align-items: center; background: #f0f0f0; padding: 0 4px; font-size: 7px; color: #666; }
.views { display: flex; margin: 0 5px 0 auto; }
.views button { width: 21px; height: 13px; }
.views .on { background: #cdcdcd; }
.status input { appearance: none; width: 67px; height: 9px; margin: 0 3px; background: linear-gradient(#b5b5b5, #b5b5b5) center / 100% 1px no-repeat; }
.status input::-webkit-slider-thumb { appearance: none; width: 3px; height: 7px; background: #666; }
.status output { width: 22px; text-align: right; color: #888; }
.zoom-step { width: 5px; }

.taskbar { height: 26px; display: flex; color: #fff; background: linear-gradient(90deg, #1d1d1f, #26272a 30%, #46403f 55%, #252426 75%, #1c1c1e); }
.start { width: 31px; background: #1c1c1e; }
.search { width: 224px; display: flex; align-items: center; gap: 6px; padding-left: 8px; background: #f1f1f1; color: #444; }
.search input { flex: 1; font: 10px/14px Lato, sans-serif; }
.search input::placeholder { color: #444; opacity: 1; }
.apps { width: 453px; display: flex; }
.apps button { flex: 1; border-bottom: 2px solid transparent; }
.apps .running { border-color: #76b9ed; }
.apps .focused { background: #50565b; }
.skype span { width: 14px; height: 14px; border-radius: 6px; background: #14a9e8; font: bold 10px/14px "Open Sans", sans-serif; text-align: center; }
.console { width: 16px; height: 16px; background: #080808; font: italic 5px/16px Lato, sans-serif; color: #ddd; text-align: center; }
.console i { color: #e2453c; }
.tray { margin-left: auto; padding-right: 17px; display: flex; align-items: center; gap: 6px; font-size: 8px; line-height: 12px; }
.tray p { margin: 0; text-align: center; white-space: nowrap; }
.tray .net { text-align: right; }
.tray .clock { width: 38px; }
.tray .clock + svg { margin-left: 4px; }
</style>
